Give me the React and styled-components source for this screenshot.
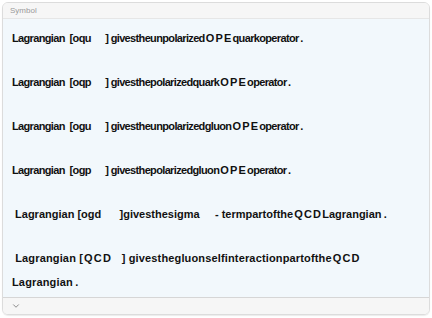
import React from 'react';
import styled, { createGlobalStyle } from 'styled-components';
import { ChevronDown } from 'lucide-react';

const Global = createGlobalStyle`
  html, body { margin: 0; padding: 0; background: #ffffff; }
  body { font-family: "Liberation Sans", Arial, sans-serif; }
`;

const Card = styled.div`
  margin: 2px 2px 3px 2px;
  height: 313px;
  box-sizing: border-box;
  border: 1px solid #dcdcdc;
  border-radius: 6px;
  overflow: hidden;
  display: flex;
  flex-direction: column;
  box-shadow: 0 1px 1px rgba(0,0,0,0.08);
`;

const Header = styled.div`
  height: 15px;
  flex: none;
  background: #f6f6f6;
  border-bottom: 1px solid #e6e6e6;
  display: flex;
  align-items: center;
  padding-left: 7px;
  font-size: 8px;
  color: #9a9a9a;
`;

const Body = styled.div`
  flex: 1;
  background: #f2f8fc;
  padding: 7px 34px 0 9px;
  overflow: hidden;
`;

const Para = styled.p`
  margin: 0 0 20px 0;
  font-size: 11px;
  font-weight: 700;
  letter-spacing: ${p => p.$spacing};
  line-height: 24px;
  color: #111111;
  white-space: pre-wrap;
`;

const Acr = styled.span`
  letter-spacing: 1.2px;
  margin-left: 1px;
`;

const Footer = styled.div`
  height: 16px;
  flex: none;
  background: #f6f6f6;
  border-top: 1px solid #d6d6d6;
  display: flex;
  align-items: center;
  padding-left: 8px;
  color: #777;
`;

const lines = [
  { sp: '-0.65px', parts: ['Lagrangian  [oqu      ] givestheunpolarized', 'OPE', 'quarkoperator\u2009.'] },
  { sp: '-0.65px', parts: ['Lagrangian  [oqp      ] givesthepolarizedquark', 'OPE', 'operator\u2009.'] },
  { sp: '-0.65px', parts: ['Lagrangian  [ogu      ] givestheunpolarizedgluon', 'OPE', 'operator\u2009.'] },
  { sp: '-0.65px', parts: ['Lagrangian  [ogp      ] givesthepolarizedgluon', 'OPE', 'operator\u2009.'] },
  { sp: '0px', parts: [' Lagrangian [ogd      ]givesthesigma     - termpartofthe', 'QCD', 'Lagrangian\u2009.'] },
  { sp: '0.15px', parts: [' Lagrangian [', 'QCD', '   ] givesthegluonselfinteractionpartofthe', 'QCD', ' ', 'Lagrangian\u2009.'] },
];

export default function App() {
  return (
    <>
      <Global />
      <Card>
        <Header>Symbol</Header>
        <Body>
          {lines.map((line, i) => (
            <Para key={i} $spacing={line.sp}>
              {line.parts.map((p, j) =>
                p === 'OPE' || p === 'QCD'
                  ? <Acr key={j}>{p}</Acr>
                  : <React.Fragment key={j}>{p}</React.Fragment>
              )}
            </Para>
          ))}
        </Body>
        <Footer>
          <ChevronDown size={10} strokeWidth={2} />
        </Footer>
      </Card>
    </>
  );
}
